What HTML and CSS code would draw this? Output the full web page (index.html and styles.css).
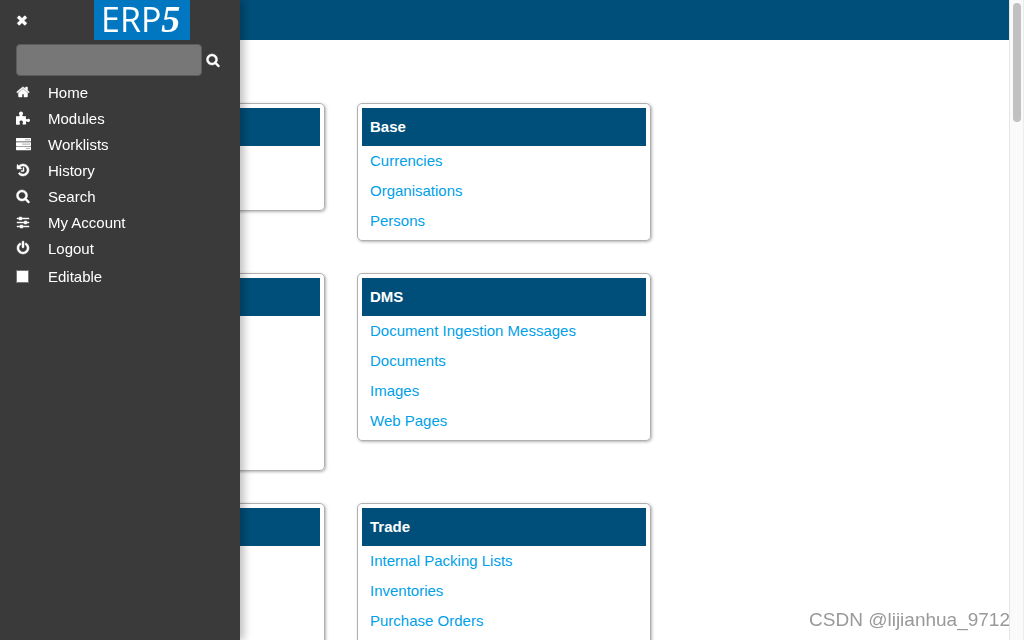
FILE: index.html
```
<!DOCTYPE html>
<html lang="en">
<head>
    <meta charset="UTF-8">
    <meta name="viewport" content="width=device-width, initial-scale=1.0">
    <title>ERP5</title>
    <link rel="stylesheet" href="styles.css">
</head>
<body>
    <aside class="panel">
        <div class="panel-header">
            <button class="close" type="button" aria-label="Close">
                <svg class="icon" viewBox="0 0 1792 1792"><path d="M1490 1322q0 40-28 68l-136 136q-28 28-68 28t-68-28l-294-294-294 294q-28 28-68 28t-68-28l-136-136q-28-28-28-68t28-68l294-294-294-294q-28-28-28-68t28-68l136-136q28-28 68-28t68 28l294 294 294-294q28-28 68-28t68 28l136 136q28 28 28 68t-28 68l-294 294 294 294q28 28 28 68z"/></svg>
            </button>
            <a class="logo" href="#"><span>ERP</span><i>5</i></a>
        </div>
        <form class="search">
            <input type="search" aria-label="Search">
            <button type="button" aria-label="Search">
                <svg class="icon" viewBox="0 0 1792 1792"><path d="M1216 832q0-185-131.5-316.5t-316.5-131.5-316.5 131.5-131.5 316.5 131.5 316.5 316.5 131.5 316.5-131.5 131.5-316.5zm512 832q0 52-38 90t-90 38q-54 0-90-38l-343-342q-179 124-399 124-143 0-273.5-55.5t-225-150-150-225-55.5-273.5 55.5-273.5 150-225 225-150 273.5-55.5 273.5 55.5 225 150 150 225 55.5 273.5q0 220-124 399l343 343q37 37 37 90z"/></svg>
            </button>
        </form>
        <nav class="menu">
            <a href="#"><svg class="icon" viewBox="0 0 1792 1792"><path d="M1472 992v480q0 26-19 45t-45 19h-384v-384h-256v384h-384q-26 0-45-19t-19-45v-480q0-1 .5-3t.5-3l575-474 575 474q1 2 1 6zm223-69l-62 74q-8 9-21 11h-3q-13 0-21-7l-692-577-692 577q-12 8-24 7-13-2-21-11l-62-74q-8-10-7-23.500t11-21.500l719-599q32-26 76-26t76 26l244 204v-195q0-14 9-23t23-9h192q14 0 23 9t9 23v408l219 182q10 8 11 21.500t-7 23.500z"/></svg>Home</a>
            <a href="#"><svg class="icon fine" viewBox="0 0 14 14"><path d="M0 5.200Q2 5.500 3.400 5.100Q4 4.700 3.500 3.900Q2.900 3.100 3 2.200Q3.200.6 5 .5Q6.900.6 7 2.300Q7 3.200 6.400 4Q6.100 4.800 6.800 5.100Q8.200 5.400 10 4.900Q9.700 6.600 10 7.900Q10.300 8.600 11 8.200Q11.900 7.500 12.800 7.700Q14 8.100 14 9.300Q13.900 10.800 12.700 11Q11.900 11.100 11.200 10.500Q10.500 10 10.100 10.700Q9.900 12 10.200 13.300Q8.200 13.700 6.800 13.400Q6.200 13 6.600 12.300Q7.200 11.500 6.900 10.700Q6.500 9.600 5.200 9.600Q3.800 9.600 3.500 10.700Q3.300 11.500 3.900 12.300Q4.300 13 3.800 13.400Q2 13.900 0 13.400Z"/></svg>Modules</a>
            <a href="#"><svg class="icon fine" viewBox="0 0 14 14"><path d="M.5 1h14q.5 0 .5.500v2.500q0 .6-.5.600h-14q-.5 0-.5-.600v-2.500q0-.5.5-.500zM.5 5.300h14q.5 0 .5.500v2.500q0 .6-.5.600h-14q-.5 0-.5-.600v-2.500q0-.5.5-.500zM.5 9.600h14q.5 0 .5.500v2.500q0 .6-.5.600h-14q-.5 0-.5-.600v-2.500q0-.5.5-.500z"/><path class="groove" d="M9 2.800h5M6 7.100h8M10 11.400h4"/></svg>Worklists</a>
            <a href="#"><svg class="icon" viewBox="0 0 1792 1792"><path d="M1664 896q0 156-61 298t-164 245-245 164-298 61q-172 0-327-72.500t-264-204.500q-7-10-6.500-22.500t8.500-20.500l137-138q10-9 25-9 16 2 23 12 73 95 179 147t225 52q104 0 198.500-40.500t163.500-109.500 109.500-163.500 40.500-198.500-40.500-198.500-109.500-163.500-163.500-109.500-198.500-40.500q-98 0-188 35.500t-160 101.500l137 138q31 30 14 69-17 40-59 40h-448q-26 0-45-19t-19-45v-448q0-42 40-59 39-17 69 14l130 129q107-101 244.500-156.500t284.500-55.500q156 0 298 61t245 164 164 245 61 298zm-640-288v448q0 14-9 23t-23 9h-320q-14 0-23-9t-9-23v-64q0-14 9-23t23-9h224v-352q0-14 9-23t23-9h64q14 0 23 9t9 23z"/></svg>History</a>
            <a href="#"><svg class="icon" viewBox="0 0 1792 1792"><path d="M1216 832q0-185-131.5-316.5t-316.5-131.5-316.5 131.5-131.5 316.5 131.5 316.5 316.5 131.5 316.5-131.5 131.5-316.5zm512 832q0 52-38 90t-90 38q-54 0-90-38l-343-342q-179 124-399 124-143 0-273.5-55.5t-225-150-150-225-55.5-273.5 55.5-273.5 150-225 225-150 273.5-55.5 273.5 55.5 225 150 150 225 55.5 273.5q0 220-124 399l343 343q37 37 37 90z"/></svg>Search</a>
            <a href="#"><svg class="icon" viewBox="0 0 1792 1792"><path d="M480 1408v128h-352v-128h352zm352-128q26 0 45 19t19 45v256q0 26-19 45t-45 19h-256q-26 0-45-19t-19-45v-256q0-26 19-45t45-19h256zm160-384v128h-864v-128h864zm-640-512v128h-224v-128h224zm1312 1024v128h-736v-128h736zm-960-1152q26 0 45 19t19 45v256q0 26-19 45t-45 19h-256q-26 0-45-19t-19-45v-256q0-26 19-45t45-19h256zm640 512q26 0 45 19t19 45v256q0 26-19 45t-45 19h-256q-26 0-45-19t-19-45v-256q0-26 19-45t45-19h256zm320 128v128h-224v-128h224zm0-512v128h-864v-128h864z"/></svg>My Account</a>
            <a href="#"><svg class="icon" viewBox="0 0 1792 1792"><path d="M1664 896q0 156-61 298t-164 245-245 164-298 61-298-61-245-164-164-245-61-298q0-182 80.500-343t226.500-270q43-32 95.500-25t83.500 50q32 42 24.500 94.500t-49.500 84.500q-98 74-151.500 181t-53.500 228q0 104 40.500 198.500t109.500 163.500 163.500 109.500 198.500 40.500 198.500-40.500 163.500-109.500 109.500-163.500 40.500-198.500q0-121-53.500-228t-151.500-181q-42-32-49.500-84.500t24.500-94.500q31-43 84-50t95 25q146 109 226.500 270t80.500 343zm-640-768v640q0 52-38 90t-90 38-90-38-38-90v-640q0-52 38-90t90-38 90 38 38 90z"/></svg>Logout</a>
            <label><input type="checkbox">Editable</label>
        </nav>
    </aside>

    <div class="page">
        <header class="topbar"></header>
        <main class="modules">
            <section class="card first">
                <h2></h2>
                <ul><li></li><li></li></ul>
            </section>
            <section class="card second">
                <h2>Base</h2>
                <ul>
                    <li><a href="#">Currencies</a></li>
                    <li><a href="#">Organisations</a></li>
                    <li><a href="#">Persons</a></li>
                </ul>
            </section>
            <section class="card first">
                <h2></h2>
                <ul><li></li><li></li><li></li><li></li><li></li></ul>
            </section>
            <section class="card second">
                <h2>DMS</h2>
                <ul>
                    <li><a href="#">Document Ingestion Messages</a></li>
                    <li><a href="#">Documents</a></li>
                    <li><a href="#">Images</a></li>
                    <li><a href="#">Web Pages</a></li>
                </ul>
            </section>
            <section class="card first">
                <h2></h2>
                <ul><li></li><li></li><li></li><li></li></ul>
            </section>
            <section class="card second">
                <h2>Trade</h2>
                <ul>
                    <li><a href="#">Internal Packing Lists</a></li>
                    <li><a href="#">Inventories</a></li>
                    <li><a href="#">Purchase Orders</a></li>
                    <li></li>
                </ul>
            </section>
        </main>
    </div>
    <div class="scrollbar"><div class="thumb"></div></div>
    <div class="watermark">CSDN @lijianhua_9712</div>
</body>
</html>
```
FILE: styles.css
```
* {
    box-sizing: border-box;
}
body {
    margin: 0;
    height: 100vh;
    display: flex;
    overflow: hidden;
    background: #fff;
    font-family: "Liberation Sans", Arial, sans-serif;
    font-size: 15px;
}
a {
    text-decoration: none;
}
button {
    border: none;
    background: none;
    padding: 0;
    color: inherit;
    cursor: pointer;
}
.icon {
    display: block;
    width: 14px;
    height: 14px;
    fill: currentColor;
    stroke: currentColor;
    stroke-width: 60;
    overflow: visible;
}
.icon.fine {
    stroke-width: 0;
}
.icon .groove {
    stroke: #aaa;
    stroke-width: 1;
}

/* side panel */
.panel {
    position: fixed;
    top: 0;
    bottom: 0;
    left: 0;
    z-index: 1;
    width: 240px;
    background: #3a3a3a;
    color: #fff;
    box-shadow: 4px 0 8px rgba(0, 0, 0, 0.25);
}
.panel-header {
    display: flex;
    justify-content: space-between;
    height: 40px;
    padding: 0 50px 0 15px;
}
.logo {
    display: flex;
    align-items: baseline;
    padding-left: 7px;
    width: 96px;
    height: 40px;
    background: #0077c0;
    color: #fff;
    font-family: "Open Sans", "Noto Sans", sans-serif;
    font-size: 34px;
    line-height: 38px;
}
.logo i {
    font-family: "Liberation Serif", serif;
    font-size: 38px;
    font-weight: bold;
}
.search {
    display: flex;
    gap: 4px;
    padding: 4px 16px 3px;
}
.search input {
    width: 186px;
    height: 32px;
    padding: 4px 8px;
    border: 1px solid #5c5c5c;
    border-radius: 4px;
    background: #777;
    color: #fff;
}
.menu {
    display: flex;
    flex-direction: column;
}
.menu a, .menu label {
    display: flex;
    align-items: center;
    gap: 18px;
    height: 26px;
    padding: 0 16px;
    color: #fff;
}
.menu label {
    height: 30px;
    gap: 19px;
}
.menu input {
    appearance: none;
    width: 13px;
    height: 13px;
    margin: 0;
    border: 1px solid #767676;
    background: #fff;
}

/* module list */
.page {
    flex: 1;
    overflow: hidden;
}
.topbar {
    height: 40px;
    background: #004f7a;
}
.modules {
    display: grid;
    grid-template-columns: repeat(3, 1fr);
    align-items: start;
    gap: 32px;
    padding: 63px 32px 32px 31px;
}
.card {
    padding: 4px;
    border: 1px solid #b0b0b0;
    border-radius: 5px;
    box-shadow: 1px 1px 3px rgba(0, 0, 0, 0.3);
}
.card.first {
    grid-column: 1;
}
.card.second {
    grid-column: 2;
}
.card h2 {
    height: 38px;
    margin: 0;
    padding: 0 8px;
    background: #004f7a;
    color: #fff;
    font-size: 15px;
    line-height: 38px;
}
.card ul {
    margin: 0;
    padding: 0 8px;
    list-style: none;
}
.card li {
    height: 30px;
    line-height: 30px;
}
.card a {
    color: #009fe8;
}

.scrollbar {
    width: 15px;
    padding: 3px;
    border-left: 1px solid #e6e6e6;
    border-right: 1px solid #ededed;
    background: #fafafa;
}
.thumb {
    width: 8px;
    height: 119px;
    border-radius: 4px;
    background: #c1c1c1;
}
.watermark {
    position: fixed;
    right: 14px;
    bottom: 9px;
    color: #999;
    font-size: 19px;
    text-shadow: -1px -1px 0 #fff;
}
```
